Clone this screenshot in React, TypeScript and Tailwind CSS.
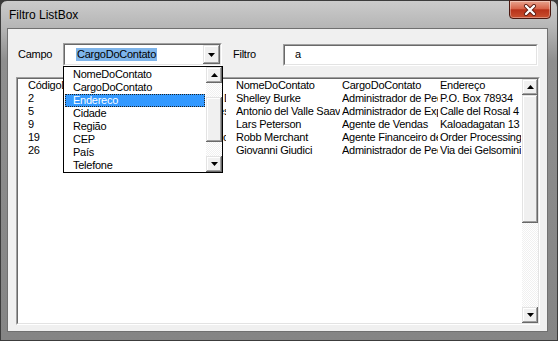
import React from "react";

const raised =
  "bg-[#f0f0f0] shadow-[inset_-1px_-1px_0_#696969,inset_1px_1px_0_#e3e3e3,inset_-2px_-2px_0_#a0a0a0,inset_2px_2px_0_#ffffff]";
const track =
  "bg-[repeating-conic-gradient(#f0f0f0_0%_25%,#ffffff_0%_50%)] bg-[length:2px_2px]";

function Arrow({ up }: { up?: boolean }) {
  return (
    <svg width="7" height="4" viewBox="0 0 7 4">
      <polygon points={up ? "0,4 3.5,0 7,4" : "0,0 7,0 3.5,4"} fill="#000" />
    </svg>
  );
}

function ArrowButton({ up, className = "" }: { up?: boolean; className?: string }) {
  return (
    <div className={`${raised} flex items-center justify-center ${className}`}>
      <Arrow up={up} />
    </div>
  );
}

const campos = ["NomeDoContato", "CargoDoContato", "Endereco", "Cidade", "Região", "CEP", "País", "Telefone"];

const rows = [
  ["CódigoDoFornecedor", "NomeDaEmpresa", "NomeDoContato", "CargoDoContato", "Endereço"],
  ["2", "New Orleans Cajun Delights", "Shelley Burke", "Administrador de Pedidos", "P.O. Box 78934"],
  ["5", "Cooperativa de Quesos 'Las Cabras'", "Antonio del Valle Saavedra", "Administrador de Exportação", "Calle del Rosal 4"],
  ["9", "PB Knäckebröd AB", "Lars Peterson", "Agente de Vendas", "Kaloadagatan 13"],
  ["19", "New England Seafood Cannery", "Robb Merchant", "Agente Financeiro de Atacado", "Order Processing Dept."],
  ["26", "Pasta Buttini s.r.l.", "Giovanni Giudici", "Administrador de Pedidos", "Via dei Gelsomini, 153"],
];

const cols = [
  { outer: "w-[102px]", inner: "w-[100px]" },
  { outer: "w-[106px]", inner: "w-[96px]" },
  { outer: "w-[106px]", inner: "w-[104px]" },
  { outer: "w-[98px]", inner: "w-[96px]" },
  { outer: "w-[82px]", inner: "w-[81px]" },
];

function Sunken({ className = "", children }: { className?: string; children?: React.ReactNode }) {
  return (
    <div className={`border-t border-l border-t-[#a0a0a0] border-l-[#a0a0a0] border-r border-b border-r-white border-b-white ${className}`}>
      <div className="h-full w-full border-t border-l border-t-[#696969] border-l-[#696969] border-r border-b border-r-[#e3e3e3] border-b-[#e3e3e3] bg-white">
        {children}
      </div>
    </div>
  );
}

export default function App() {
  return (
    <div className="w-[558px] h-[341px] bg-[#3a3a3a] font-['Liberation_Sans',Arial,sans-serif] text-[11px] tracking-[-0.25px] text-black overflow-hidden">
      <div className="w-full h-full rounded-t-[7px] border border-[#3c3c3c] bg-[linear-gradient(180deg,#cbcbcb_0px,#b6b6b6_26px,#8e8e8e_60px,#858585_100%)] flex flex-col">
        {/* Title bar */}
        <div className="h-[27px] flex items-start shrink-0">
          <span className="pl-[8px] pt-[7px] text-[12px] leading-[14px] tracking-normal text-black">Filtro ListBox</span>
          <div className="ml-auto mr-[6px] -mt-px w-[42px] h-[19px] rounded-b-[4px] border border-[#4a1810] bg-[linear-gradient(180deg,#e9a48f_0%,#d8644a_45%,#b8321a_52%,#c9502f_100%)] shadow-[inset_0_0_0_1px_rgba(255,255,255,0.35)] flex items-center justify-center">
            <svg width="14" height="12" viewBox="0 0 14 12">
              <path d="M3 2 L11 10 M11 2 L3 10" stroke="#5a1a10" strokeWidth="4" strokeLinecap="round" />
              <path d="M3 2 L11 10 M11 2 L3 10" stroke="#ffffff" strokeWidth="2.4" strokeLinecap="round" />
            </svg>
          </div>
        </div>

        {/* Client area */}
        <div className="ml-[6px] mr-[9px] mb-[8px] flex-1 border border-[#707070] bg-[#f0f0f0] flex flex-col">
          <div className="mt-[14px] h-[23px] flex items-center">
            <span className="pl-[10px] w-[55px]">Campo</span>
            <div className="relative w-[159px] h-[23px]">
              <Sunken className="h-full">
                <div className="h-full flex items-center">
                  <div className="flex-1 pl-[11px]">
                    <span className="bg-[#7eb4ea] px-px leading-[13px] inline-block">CargoDoContato</span>
                  </div>
                  <ArrowButton className="w-[17px] h-[19px]" />
                </div>
              </Sunken>
              {/* open dropdown list */}
              <div className="absolute left-0 top-[23px] w-[160px] h-[107px] border border-black bg-white flex z-10">
                <div className="flex-1 pt-px">
                  {campos.map((c) =>
                    c === "Endereco" ? (
                      <div key={c} className="mx-px h-[13px] leading-[11px] pl-[7px] bg-[#3399ff] text-white border border-dotted border-[#222]">
                        {c}
                      </div>
                    ) : (
                      <div key={c} className="h-[13px] leading-[13px] pl-[9px] whitespace-nowrap">
                        {c}
                      </div>
                    )
                  )}
                </div>
                <div className="w-[16px] flex flex-col">
                  <ArrowButton up className="h-[16px]" />
                  <div className={`h-[14px] ${track}`} />
                  <div className={`h-[45px] ${raised}`} />
                  <div className={`flex-1 ${track}`} />
                  <ArrowButton className="h-[16px]" />
                </div>
              </div>
            </div>
            <span className="ml-[10px] w-[51px] pl-px">Filtro</span>
            <Sunken className="w-[255px] h-[22px]">
              <div className="h-full flex items-center pl-[10px]">a</div>
            </Sunken>
          </div>

          {/* List box */}
          <Sunken className="mt-[11px] ml-[8px] w-[524px] h-[248px]">
            <div className="h-full flex">
              <div className="flex-1 pl-[10px]">
                {rows.map((r, i) => (
                  <div key={i} className="flex h-[13px] leading-[13px]">
                    {r.map((cell, j) => (
                      <div key={j} className={`${cols[j].outer} shrink-0`}>
                        <div className={`${cols[j].inner} overflow-hidden whitespace-nowrap`}>{cell}</div>
                      </div>
                    ))}
                  </div>
                ))}
              </div>
              <div className="w-[16px] flex flex-col">
                <ArrowButton up className="h-[16px]" />
                <div className={`h-[128px] ${raised}`} />
                <div className={`flex-1 ${track}`} />
                <ArrowButton className="h-[16px]" />
              </div>
            </div>
          </Sunken>
        </div>
      </div>
    </div>
  );
}
